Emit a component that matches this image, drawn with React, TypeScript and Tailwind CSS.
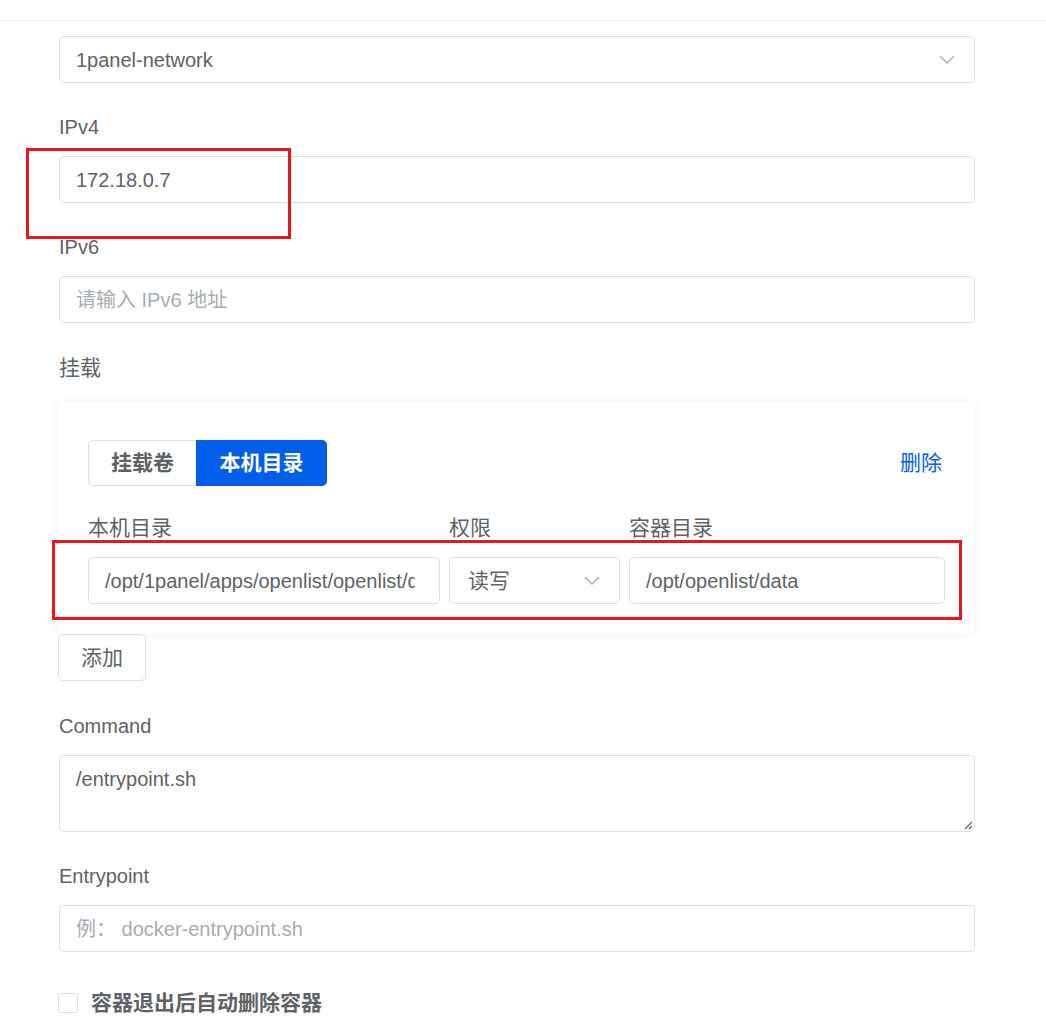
import type { ReactNode } from "react";

const font = { fontFamily: '"Liberation Sans", "Noto Sans CJK SC", sans-serif' };

const boxClass =
  "flex h-[47px] w-full items-center rounded-[5px] border border-[#dcdfe6] bg-white px-[16px] text-[20px] text-[#606266]";
const labelClass = "flex h-[30px] items-center text-[20px] leading-none text-[#606266]";
const cjk = "text-[21px]";

function Chevron() {
  return (
    <svg width="16" height="9" viewBox="0 0 16 9" fill="none" className="shrink-0">
      <path d="M1 1l7 7 7-7" stroke="#a8abb2" strokeWidth="1.3" />
    </svg>
  );
}

function Field({ label, children }: { label?: string; children: ReactNode }) {
  return (
    <div className="mb-[29px]">
      {label && <div className={`${labelClass} mb-[14px]`}>{label}</div>}
      {children}
    </div>
  );
}

export default function App() {
  return (
    <div className="relative min-h-[1030px] bg-white" style={font}>
      <div className="h-[21px] border-b border-[#eef0f3]" />

      <div className="pl-[59px] pr-[71px] pt-[15px]">
        <Field>
          <div className={`${boxClass} justify-between pr-[19px]`}>
            <span>1panel-network</span>
            <Chevron />
          </div>
        </Field>

        <Field label="IPv4">
          <div className={boxClass}>172.18.0.7</div>
        </Field>

        <Field label="IPv6">
          <div className={`${boxClass} text-[#a8abb2]`}>请输入 IPv6 地址</div>
        </Field>

        <div className={`${labelClass} ${cjk} mb-[20px]`}>挂载</div>

        {/* mount card */}
        <div className="-ml-px rounded-[6px] bg-white px-[30px] pt-[38px] pb-[30px] shadow-[0_0_10px_rgba(0,30,80,0.07)]">
          <div className="flex items-center justify-between">
            <div className={`flex h-[46px] ${cjk} font-semibold`}>
              <div className="flex w-[108px] items-center justify-center rounded-l-[5px] border border-r-0 border-[#dcdfe6] text-[#606266]">
                挂载卷
              </div>
              <div className="flex w-[131px] items-center justify-center rounded-r-[5px] bg-[#005eeb] text-white">
                本机目录
              </div>
            </div>
            <span className={`${cjk} mr-[3px] text-[#005eeb]`}>删除</span>
          </div>

          <div className="mt-[26px] grid grid-cols-[352px_171px_1fr] gap-x-[9px]">
            <div className={`${labelClass} ${cjk} mb-[15px]`}>本机目录</div>
            <div className={`${labelClass} ${cjk} mb-[15px]`}>权限</div>
            <div className={`${labelClass} ${cjk} mb-[15px]`}>容器目录</div>

            <div className={boxClass}>
              <span className="block w-[310px] overflow-hidden whitespace-nowrap">
                /opt/1panel/apps/openlist/openlist/data
              </span>
            </div>
            <div className={`${boxClass} justify-between pl-[18px] pr-[19px]`}>
              <span className={cjk}>读写</span>
              <Chevron />
            </div>
            <div className={boxClass}>/opt/openlist/data</div>
          </div>
        </div>

        <button
          type="button"
          className={`-ml-px flex h-[47px] w-[88px] items-center justify-center rounded-[5px] border border-[#dcdfe6] bg-white ${cjk} text-[#606266]`}
        >
          添加
        </button>

        <div className="mt-[30px]">
          <Field label="Command">
            <div className="relative h-[77px] w-full rounded-[5px] border border-[#dcdfe6] px-[16px] pt-[8px] text-[20px] text-[#606266]">
              /entrypoint.sh
              <svg width="10" height="10" viewBox="0 0 10 10" className="absolute right-[1px] bottom-[1px]">
                <path d="M9 2L2 9M9 6L6 9" stroke="#606266" strokeWidth="1.2" />
              </svg>
            </div>
          </Field>
        </div>

        <Field label="Entrypoint">
          <div className={`${boxClass} text-[#a8abb2]`}>例： docker-entrypoint.sh</div>
        </Field>

        <label className="mt-[35px] flex items-center gap-[13px]">
          <span className="-ml-px h-[20px] w-[20px] rounded-[3px] border border-[#dcdfe6] bg-white" />
          <span className={`${cjk} font-semibold text-[#606266]`}>容器退出后自动删除容器</span>
        </label>
      </div>

      {/* annotation frames */}
      <div className="pointer-events-none absolute left-[26px] top-[148px] h-[91px] w-[265px] border-[3px] border-[#e8161e]" />
      <div className="pointer-events-none absolute left-[52px] top-[540px] h-[80px] w-[910px] border-[3px] border-[#e8161e]" />
    </div>
  );
}
